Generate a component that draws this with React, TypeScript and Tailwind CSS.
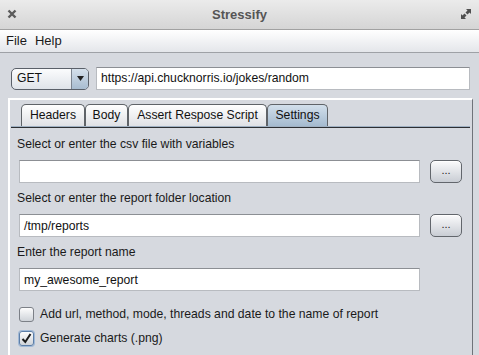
import React from "react";

const font = { fontFamily: '"Liberation Sans", Arial, sans-serif' };

function TextField({ value, width }: { value: string; width: string }) {
  return (
    <div
      className={`${width} h-[23px] bg-white border border-[#b8bbc0] border-t-[#8c8f94] flex items-center pl-[4px] text-[12.2px] text-[#111]`}
    >
      {value}
    </div>
  );
}

function DotsButton() {
  return (
    <div className="w-[32px] h-[23px] rounded-[5px] border border-[#62666c] bg-gradient-to-b from-[#fbfbfc] to-[#c9cdd4] flex items-center justify-center text-[11px] leading-none text-[#222] shadow-[inset_0_1px_0_#fff]">
      <span className="mt-[-2px]">...</span>
    </div>
  );
}

function Tab({ label, selected, w }: { label: string; selected?: boolean; w: string }) {
  return (
    <div
      className={`${w} h-[22px] rounded-t-[5px] border border-b-0 border-[#5f6368] flex items-center justify-center text-[12.2px] text-[#111] ${
        selected
          ? "bg-gradient-to-b from-[#d2dfeb] to-[#a5bbd0]"
          : "bg-gradient-to-b from-[#ffffff] to-[#dfe1e5]"
      }`}
    >
      {label}
    </div>
  );
}

function Checkbox({ checked }: { checked?: boolean }) {
  return (
    <div
      className={`w-[15px] h-[15px] shrink-0 rounded-[3px] border ${
        checked ? "border-[#5c7ea8] shadow-[0_0_0_1px_#9fb8d6]" : "border-[#7c8087]"
      } bg-gradient-to-b from-[#fdfdfd] to-[#cfd3d9] flex items-center justify-center`}
    >
      {checked && (
        <svg width="11" height="11" viewBox="0 0 11 11">
          <path d="M1.5 6 L4.3 9 L9.5 1" stroke="#1b1b1b" strokeWidth="2" fill="none" />
        </svg>
      )}
    </div>
  );
}

export default function App() {
  return (
    <div className="w-[479px] h-[355px] overflow-hidden bg-[#d6d9df] flex flex-col" style={font}>
      {/* title bar */}
      <div className="h-[30px] shrink-0 bg-gradient-to-b from-[#ebebeb] to-[#d5d5d5] border-b border-[#a1a1a1] flex items-center justify-between px-[7px] relative">
        <svg width="10" height="10" viewBox="0 0 10 10" className="mt-[-1px]">
          <path d="M1.5 1.5 L8.5 8.5 M8.5 1.5 L1.5 8.5" stroke="#5b5b5b" strokeWidth="2.4" />
        </svg>
        <div className="absolute left-0 right-0 text-center text-[13px] font-bold text-[#555] pointer-events-none">
          Stressify
        </div>
        <svg width="14" height="14" viewBox="0 0 14 14" className="mr-[-1px] mt-[-1px]">
          <path d="M7 2 L12 2 L12 7 Z" fill="#4f4f4f" />
          <path d="M9 3 L11 5 L8.5 7.5 L6.5 5.5 Z" fill="#4f4f4f" />
          <path d="M2 7 L2 12 L7 12 Z" fill="#4f4f4f" />
          <path d="M3 9 L5 11 L7.5 8.5 L5.5 6.5 Z" fill="#4f4f4f" />
        </svg>
      </div>

      {/* menu bar */}
      <div className="h-[23px] shrink-0 bg-gradient-to-b from-[#ffffff] to-[#e4e6ea] border-b border-[#9ea1a6] flex items-center gap-[8px] px-[6px] text-[13px] text-[#1a1a1a]">
        <span>File</span>
        <span>Help</span>
      </div>

      {/* request row */}
      <div className="flex items-center gap-[7px] pl-[11px] pr-[9px] mt-[14px] shrink-0">
        <div className="w-[78px] h-[22px] rounded-[5px] border border-[#5a6069] bg-gradient-to-b from-[#fbfcfd] to-[#dfe3e9] flex overflow-hidden">
          <div className="flex-1 flex items-center pl-[5px] text-[12.2px] text-[#111]">GET</div>
          <div className="w-[17px] border-l border-[#7d8590] bg-gradient-to-b from-[#d5e0eb] to-[#a8bcd0] flex items-center justify-center">
            <svg width="7" height="5" viewBox="0 0 7 5">
              <path d="M0 0 L7 0 L3.5 5 Z" fill="#222" />
            </svg>
          </div>
        </div>
        <div className="flex-1 h-[23px] bg-white border border-[#b8bbc0] border-t-[#8c8f94] flex items-center pl-[4px] text-[12.2px] text-[#111]">
          https://api.chucknorris.io/jokes/random
        </div>
      </div>

      {/* tab panel */}
      <div className="ml-[8px] mr-[6px] mt-[8px] flex-1 border-t-2 border-l-2 border-white border-r border-r-[#6f7379] flex flex-col">
        <div className="flex pl-[11px] pt-[4px] pr-[2px]">
          <Tab label="Headers" w="w-[64px]" />
          <Tab label="Body" w="w-[43px]" />
          <Tab label="Assert Respose Script" w="w-[139px]" />
          <Tab label="Settings" w="w-[61px]" selected />
        </div>
        <div className="ml-[1px] mr-[2px] h-[1px] bg-[#9fb0c2]" />
        <div className="ml-[1px] mr-[2px] h-[1px] bg-[#2c2f33]" />

        <div className="flex flex-col pl-[7px] pr-[8px] text-[12.2px] leading-[16px] text-[#1a1a1a]">
          <div className="mt-[8px]">Select or enter the csv file with variables</div>
          <div className="mt-[8px] flex items-center gap-[10px] pl-[2px]">
            <TextField value="" width="w-[401px]" />
            <DotsButton />
          </div>
          <div className="mt-[7px]">Select or enter the report folder location</div>
          <div className="mt-[8px] flex items-center gap-[10px] pl-[2px]">
            <TextField value="/tmp/reports" width="w-[401px]" />
            <DotsButton />
          </div>
          <div className="mt-[7px]">Enter the report name</div>
          <div className="mt-[8px] pl-[2px]">
            <TextField value="my_awesome_report" width="w-[401px]" />
          </div>
          <div className="mt-[15px] flex items-center gap-[6px] pl-[2px] h-[16px]">
            <Checkbox />
            <span>Add url, method, mode, threads and date to the name of report</span>
          </div>
          <div className="mt-[8px] flex items-center gap-[6px] pl-[2px] h-[16px]">
            <Checkbox checked />
            <span>Generate charts (.png)</span>
          </div>
        </div>
      </div>
    </div>
  );
}
